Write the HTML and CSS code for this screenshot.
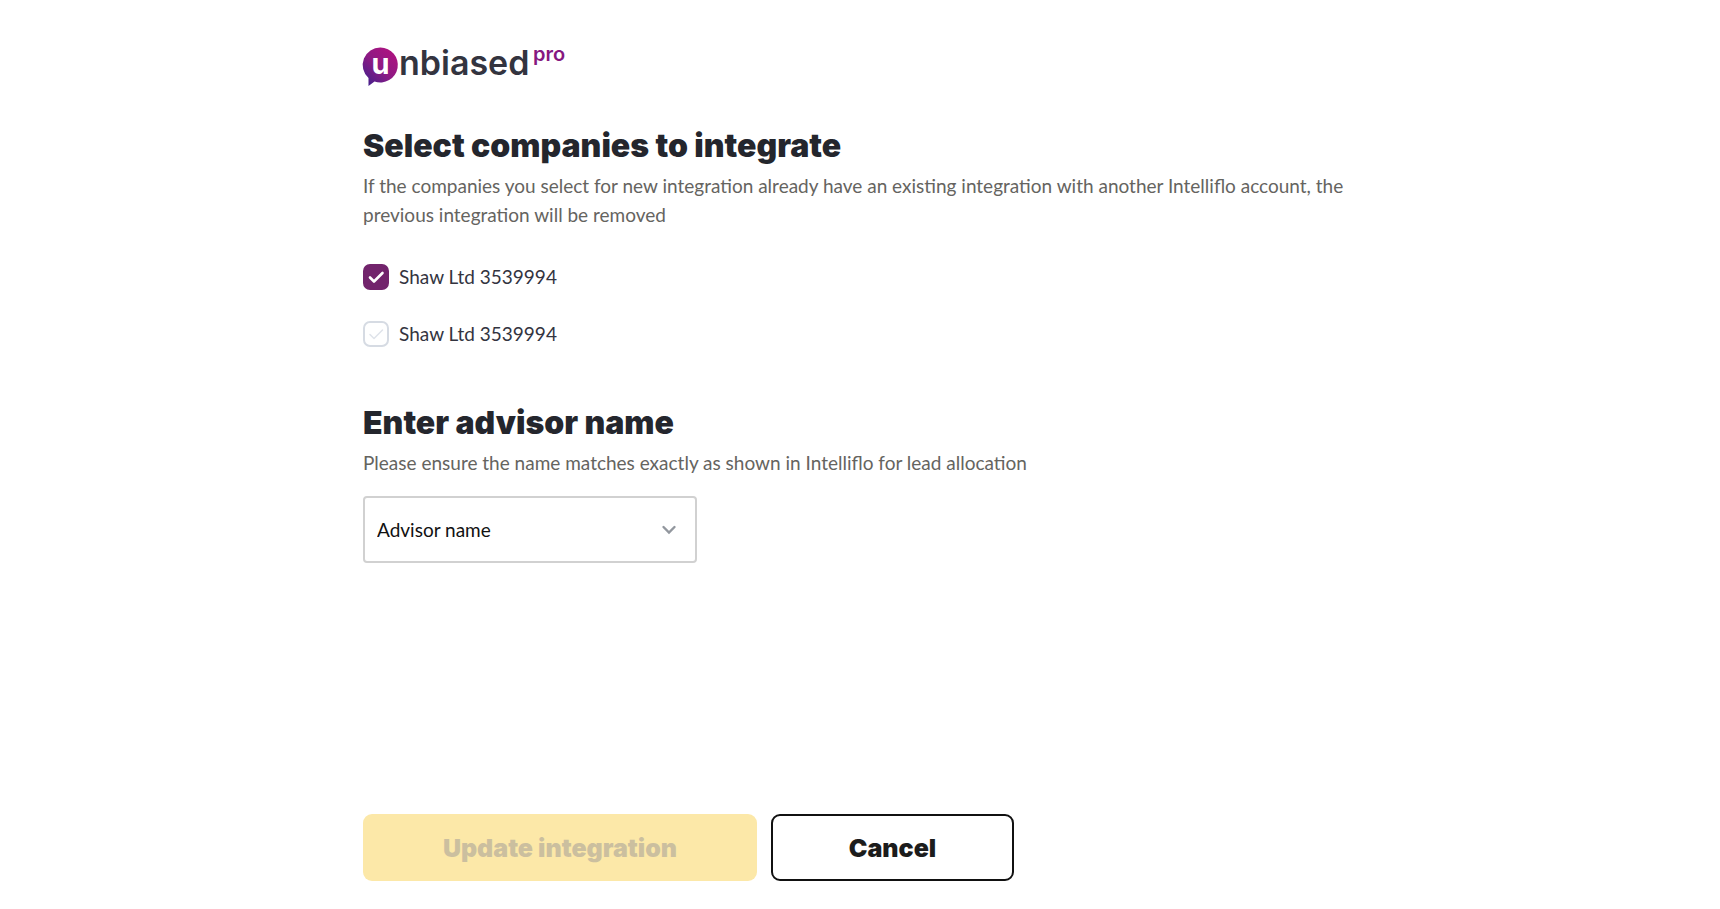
FILE: index.html
```html
<!DOCTYPE html>
<html lang="en">
<head>
<meta charset="utf-8">
<meta name="viewport" content="width=device-width, initial-scale=1">
<title>Unbiased Pro - Update integration</title>
<link rel="stylesheet" href="styles.css">
</head>
<body>
<main class="page">
  <header class="brand">
    <svg class="brand-logo" width="208" height="56" viewBox="0 -8 208 56" role="img" aria-label="unbiased pro">
      <defs>
        <linearGradient id="bubble" x1="0.85" y1="0.1" x2="0.1" y2="0.95">
          <stop offset="0" stop-color="#ad1380"/>
          <stop offset="0.5" stop-color="#8c1a84"/>
          <stop offset="1" stop-color="#43208c"/>
        </linearGradient>
      </defs>
      <path d="M17.5 0.5A17.5 17.5 0 1 1 11.5 34.5L5.5 39V31A17.5 17.5 0 0 1 17.5 0.5Z" fill="url(#bubble)"/>
      <text class="logo-u" x="17.5" y="27" text-anchor="middle">u</text>
      <text class="logo-word" x="36" y="28">nbiased</text>
      <text class="logo-pro" x="170" y="14">pro</text>
    </svg>
  </header>

  <form class="form">
    <section class="block">
      <h1 class="title">Select companies to integrate</h1>
      <p class="hint">If the companies you select for new integration already have an existing integration with another Intelliflo account, the previous integration will be removed</p>
      <div class="choices">
        <label class="choice"><input class="tick" type="checkbox" name="company" value="1" checked><svg class="tick-mark" width="26" height="26" viewBox="0 0 26 26" aria-hidden="true"><path d="M7 13.5L11 17.5L19.5 9"/></svg><span>Shaw Ltd 3539994</span></label>
        <label class="choice"><input class="tick" type="checkbox" name="company" value="2"><svg class="tick-mark" width="26" height="26" viewBox="0 0 26 26" aria-hidden="true"><path d="M7 13.5L11 17.5L19.5 9"/></svg><span>Shaw Ltd 3539994</span></label>
      </div>
    </section>

    <section class="block">
      <h2 class="title" id="advisor-title">Enter advisor name</h2>
      <p class="hint">Please ensure the name matches exactly as shown in Intelliflo for lead allocation</p>
      <div class="picker">
        <select class="picker-select" aria-labelledby="advisor-title">
          <option>Advisor name</option>
        </select>
        <svg class="picker-arrow" width="16" height="10" viewBox="0 0 16 10" aria-hidden="true"><path d="M2.5 2L8 7.5L13.5 2"/></svg>
      </div>
    </section>

    <div class="actions">
      <button class="button button-primary" type="submit" disabled>Update integration</button>
      <button class="button button-outline" type="button">Cancel</button>
    </div>
  </form>
</main>
</body>
</html>
```
FILE: styles.css
```css
* {
  box-sizing: border-box;
}

body {
  margin: 0;
  background: #fff;
  color: #33343f;
  font-family: Lato, "Liberation Sans", sans-serif;
  font-size: 19px;
  line-height: 29px;
}

.page {
  display: flex;
  flex-direction: column;
  max-width: 1042px;
  min-height: 100vh;
  margin: 0 auto;
  padding: 39px 24px 28px;
}

.brand {
  display: flex;
  margin-bottom: 31px;
}

.brand-logo {
  overflow: visible;
}

.logo-u,
.logo-word,
.logo-pro {
  font-family: Inter, "Liberation Sans", sans-serif;
}

.logo-u {
  fill: #fff;
  font-size: 29px;
  font-weight: 700;
}

.logo-word {
  fill: #33343f;
  font-size: 34px;
  font-weight: 600;
}

.logo-pro {
  fill: #86187f;
  font-size: 20px;
  font-weight: 600;
}

.form {
  display: flex;
  flex: 1;
  flex-direction: column;
  gap: 55px;
}

.title {
  margin: 0 0 5px;
  color: #24262d;
  font-family: Inter, "Liberation Sans", sans-serif;
  font-size: 32px;
  font-weight: 900;
  line-height: 40px;
}

.hint {
  margin: 0;
  color: #65645f;
}

.choices {
  display: flex;
  flex-direction: column;
  align-items: flex-start;
  gap: 28px;
  margin-top: 33px;
}

.choice {
  display: grid;
  grid-template-columns: 26px auto;
  align-items: center;
  column-gap: 10px;
}

.tick,
.tick-mark {
  grid-row: 1;
  grid-column: 1;
}

.tick {
  width: 26px;
  height: 26px;
  margin: 0;
  appearance: none;
  border: 2px solid #d6dbe3;
  border-radius: 7px;
  background: #fff;
}

.tick:checked {
  border-color: #72246c;
  background: #72246c;
}

.tick-mark {
  fill: none;
  stroke: #dfe3ea;
  stroke-width: 1.5;
  stroke-linecap: round;
  stroke-linejoin: round;
  pointer-events: none;
}

.tick:checked + .tick-mark {
  stroke: #fff;
  stroke-width: 2.6;
}

.picker {
  display: grid;
  align-items: center;
  max-width: 334px;
  margin-top: 19px;
}

.picker-select,
.picker-arrow {
  grid-row: 1;
  grid-column: 1;
}

.picker-select {
  width: 100%;
  height: 67px;
  padding: 0 48px 0 12px;
  appearance: none;
  border: 2px solid #d1d1d1;
  border-radius: 4px;
  background: #fff;
  color: #111;
  font: inherit;
}

.picker-arrow {
  justify-self: end;
  margin-right: 20px;
  fill: none;
  stroke: #92979e;
  stroke-width: 2.4;
  stroke-linecap: round;
  pointer-events: none;
}

.actions {
  display: flex;
  flex-wrap: wrap;
  gap: 14px;
  margin-top: auto;
}

.button {
  height: 67px;
  border: 2px solid transparent;
  border-radius: 9px;
  font-family: Inter, "Liberation Sans", sans-serif;
  font-size: 25px;
  font-weight: 900;
}

.button-primary {
  flex: 0 1 394px;
  background: #fce8a8;
  color: #cbbf9f;
}

.button-outline {
  flex: 0 1 243px;
  border-color: #111;
  background: #fff;
  color: #1c1c1c;
}
```
